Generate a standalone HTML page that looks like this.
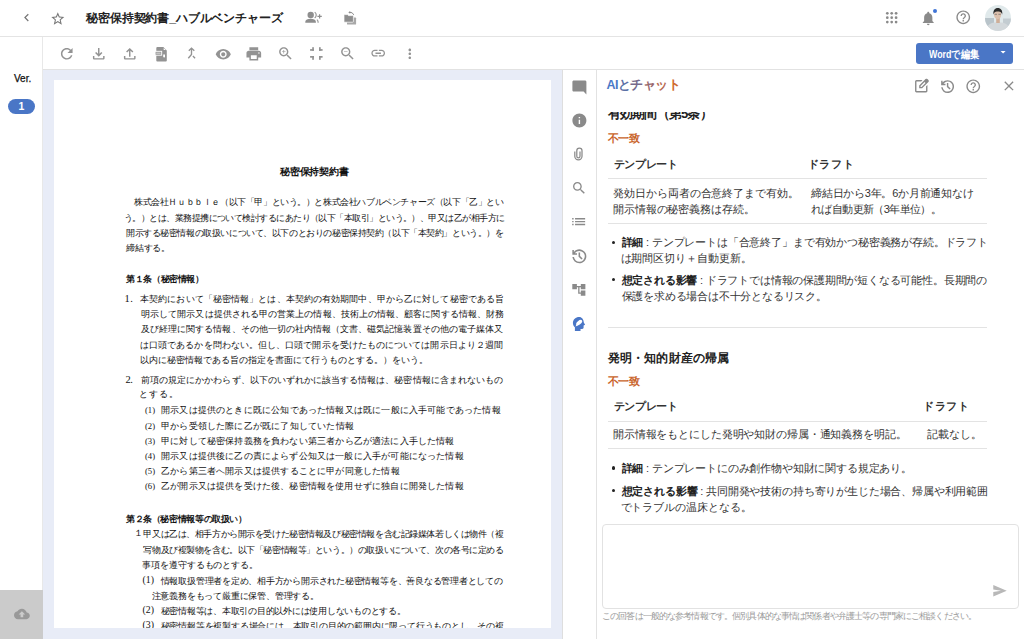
<!DOCTYPE html>
<html lang="ja"><head><meta charset="utf-8">
<style>
*{box-sizing:border-box;margin:0;padding:0}
html,body{width:1024px;height:639px;overflow:hidden;background:#fff;font-family:"Liberation Sans",sans-serif;color:#222}
svg{position:absolute;overflow:visible}
.grad{background:linear-gradient(90deg,#4a78c8 0%,#4f74bc 22%,#7a6a86 45%,#b0674e 70%,#d2661f 100%);-webkit-background-clip:text;background-clip:text;color:transparent!important}
#hdr{position:absolute;left:0;top:0;width:1024px;height:37px;background:#fff;border-bottom:1px solid #e4e4e4}
#title{position:absolute;left:86px;top:9px;font-size:13px;font-weight:bold;color:#222;white-space:nowrap;line-height:16px}
#side{position:absolute;left:0;top:37px;width:43px;height:602px;background:#fff;border-right:1px solid #e8e8e8}
#ver{position:absolute;left:0;width:43px;top:35px;text-align:center;font-size:10px;color:#222;line-height:12px}
#pill{position:absolute;left:8px;top:62px;width:27px;height:15px;border-radius:8px;background:#4a76c6;color:#fff;font-size:10.5px;font-weight:bold;text-align:center;line-height:15px}
#upl{position:absolute;left:0;top:553px;width:43px;height:49px;background:#cbcbcb}
#tb{position:absolute;left:43px;top:37px;width:981px;height:33px;background:#fff;border-bottom:1px solid #e2e2e2}
#word{position:absolute;left:873px;top:6px;width:97px;height:21px;border-radius:3px;background:#4a76c6;color:#fff;font-size:11px;font-weight:bold;line-height:21px}
#docarea{position:absolute;left:43px;top:70px;width:520px;height:569px;background:#e8ecf7;border-right:1px solid #dedede}
#page{position:absolute;left:11px;top:10px;width:497px;height:548px;background:#fff;overflow:hidden}
.tl{position:absolute;white-space:nowrap;line-height:1}
#page .tl{color:#111;font-family:"Liberation Serif",serif}
#rail{position:absolute;left:563px;top:70px;width:34px;height:569px;background:#fff;border-right:1px solid #e2e2e2}
#chat{position:absolute;left:597px;top:70px;width:427px;height:569px;background:#fff}
#scroll{position:absolute;left:0;top:42px;width:427px;height:408px;overflow:hidden}
.cl{position:absolute;white-space:nowrap;line-height:1;color:#444}
.cl b{font-weight:bold}
.hr{position:absolute;left:11px;width:379px;height:1px;background:#e3e3e3}
#aititle{position:absolute;left:10px;top:9px;font-size:12.5px;line-height:14px;white-space:nowrap;background:linear-gradient(90deg,#4a78c8 0%,#4f72b8 20%,#7a6a86 45%,#b0674e 70%,#d2661f 100%);-webkit-background-clip:text;background-clip:text;color:transparent;font-weight:bold}
#inp{position:absolute;left:5px;top:454px;width:417px;height:85px;border:1px solid #e2e2e2;border-radius:4px;background:#fff}
.dot{position:absolute;width:2px;height:2px;border-radius:1px;background:#555}
</style></head><body>

<div id="hdr">
  <svg style="left:18.5px;top:10.2px" width="15.2" height="15.2" viewBox="0 0 24 24"><path fill="#777" d="M15.41 7.41L14 6l-6 6 6 6 1.41-1.41L10.83 12z"/></svg>
  <svg style="left:49.7px;top:10.7px" width="15.6" height="15.6" viewBox="0 0 24 24"><path fill="#777" d="M22 9.24l-7.19-.62L12 2 9.19 8.63 2 9.24l5.46 4.73L5.82 21 12 17.27 18.18 21l-1.63-7.03L22 9.24zM12 15.4l-3.76 2.27 1-4.28-3.32-2.88 4.38-.38L12 6.1l1.71 4.04 4.38.38-3.32 2.88 1 4.28L12 15.4z"/></svg>
  <svg style="left:295px;top:2px" width="70" height="32" viewBox="0 0 70 32">
    <circle cx="15.7" cy="13" r="3.2" fill="#8e8e8e"/>
    <path d="M10.3 20.8v-1.1c0-1.9 2.4-2.9 5.3-2.9s5.3 1 5.3 2.9v1.1z" fill="#8e8e8e"/>
    <path d="M19.7 10.1a3.6 3.6 0 0 1 0 5.9" fill="none" stroke="#8e8e8e" stroke-width="1.1"/>
    <path d="M21.9 17.6q1.2 .9 1.2 2.4v.8" fill="none" stroke="#8e8e8e" stroke-width="1.1"/>
    <path d="M22.4 14.4h4.4M24.6 12.2v4.4" fill="none" stroke="#8e8e8e" stroke-width="1.2"/>
    <path d="M52 15.6h8.4q.7 0 .7.7v5.6q0 .7-.7.7h-7.7q-.7 0-.7-.7z" fill="#a8a8a8"/>
    <path d="M49 13.3q0-.7.7-.7h2.7l1 1h4.3q.7 0 .7.7v5.2q0 .7-.7.7h-8q-.7 0-.7-.7z" fill="#8e8e8e" stroke="#fff" stroke-width=".7"/>
    <path d="M54.6 10.3q2.9-.4 4.2 2.6" fill="none" stroke="#8e8e8e" stroke-width="1"/>
    <path d="M53.3 10.4l1.9-1.5v2.8z" fill="#8e8e8e"/>
  </svg>
  <svg style="left:886px;top:12.3px" width="12" height="12" viewBox="0 0 12 12"><circle cx="1.3" cy="1.3" r="1.35" fill="#8a8a8a"/><circle cx="1.3" cy="5.7" r="1.35" fill="#8a8a8a"/><circle cx="1.3" cy="10.1" r="1.35" fill="#8a8a8a"/><circle cx="5.7" cy="1.3" r="1.35" fill="#8a8a8a"/><circle cx="5.7" cy="5.7" r="1.35" fill="#8a8a8a"/><circle cx="5.7" cy="10.1" r="1.35" fill="#8a8a8a"/><circle cx="10.1" cy="1.3" r="1.35" fill="#8a8a8a"/><circle cx="10.1" cy="5.7" r="1.35" fill="#8a8a8a"/><circle cx="10.1" cy="10.1" r="1.35" fill="#8a8a8a"/></svg>
  <svg style="left:920.2px;top:9.6px" width="16.5" height="16.5" viewBox="0 0 24 24"><path fill="#8a8a8a" d="M12 22c1.1 0 2-.9 2-2h-4c0 1.1.89 2 2 2zm6-6v-5c0-3.07-1.64-5.64-4.5-6.32V4c0-.83-.67-1.5-1.5-1.5s-1.5.67-1.5 1.5v.68C7.63 5.36 6 7.92 6 11v5l-2 2v1h16v-1l-2-2z"/></svg>
  <div style="position:absolute;left:933px;top:9px;width:4.4px;height:4.4px;border-radius:50%;background:#3f74d6"></div>
  <svg style="left:954.6px;top:9.4px" width="16.5" height="16.5" viewBox="0 0 24 24"><path fill="#8a8a8a" d="M11 18h2v-2h-2v2zm1-16C6.48 2 2 6.48 2 12s4.48 10 10 10 10-4.48 10-10S17.52 2 12 2zm0 18c-4.41 0-8-3.59-8-8s3.59-8 8-8 8 3.59 8 8-3.59 8-8 8zm0-14c-2.21 0-4 1.79-4 4h2c0-1.1.9-2 2-2s2 .9 2 2c0 2-3 1.75-3 5h2c0-2.25 3-2.5 3-5 0-2.21-1.79-4-4-4z"/></svg>
  <!-- avatar -->
  <svg style="left:984.6px;top:4.5px" width="26" height="26" viewBox="0 0 26 26">
    <defs><clipPath id="av"><circle cx="13" cy="13" r="13"/></clipPath></defs>
    <g clip-path="url(#av)">
      <rect width="26" height="26" fill="#e0e9eb"/>
      <rect x="0" y="13" width="9" height="9" fill="#b9c4ca"/>
      <rect x="18" y="13.5" width="8" height="8" fill="#c3ccd1"/>
      <path d="M1 26c.5-5.5 4-8.8 12-8.8s11.5 3.3 12 8.8z" fill="#d3d8db"/>
      <rect x="11.2" y="13" width="3.6" height="5" fill="#cfae98"/>
      <ellipse cx="12.6" cy="9.6" rx="3.7" ry="4.6" fill="#dcc0ad"/>
      <path d="M8.4 9.6c-.5-4 1.5-6.6 4.4-6.6s5 2.3 4.4 6.6c-.4-1.6-1.2-3.2-4.4-3.2s-4 1.6-4.4 3.2z" fill="#2b2b2b"/>
      <path d="M9.6 9.3h2.4M13.4 9.3h2.4" stroke="#555" stroke-width=".6"/>
    </g>
  </svg>
</div>

<div id="side">
  <div id="pill">1</div>
  <div id="upl"></div>
</div>
<svg style="left:13.5px;top:606.2px" width="15.8" height="15.8" viewBox="0 0 24 24"><path fill="#999" d="M19.35 10.04C18.67 6.59 15.64 4 12 4 9.11 4 6.6 5.64 5.35 8.04 2.34 8.36 0 10.91 0 14c0 3.31 2.69 6 6 6h13c2.76 0 5-2.24 5-5 0-2.64-2.05-4.78-4.65-4.96zM14 13v4h-4v-4H7l5-5 5 5h-3z"/></svg>

<div id="tb">
  <div id="word">  <svg style="left:80.9px;top:2.9px" width="12.2" height="12.2" viewBox="0 0 24 24"><path fill="#fff" d="M7 10l5 5 5-5z"/></svg></div>
</div>
<!-- toolbar icons (body coords) -->
<svg style="left:58.4px;top:45.3px" width="17.5" height="17.5" viewBox="0 0 24 24"><path fill="#939393" d="M17.65 6.35C16.2 4.9 14.21 4 12 4c-4.42 0-7.99 3.58-7.99 8s3.57 8 7.99 8c3.73 0 6.84-2.55 7.73-6h-2.08c-.82 2.33-3.04 4-5.65 4-3.31 0-6-2.69-6-6s2.69-6 6-6c1.66 0 3.14.69 4.22 1.78L13 11h7V4l-2.35 2.35z"/></svg>
<svg style="left:89.7px;top:44.9px" width="17.5" height="17.5" viewBox="0 0 24 24"><path fill="#939393" d="M18 15v3H6v-3H4v3c0 1.1.9 2 2 2h12c1.1 0 2-.9 2-2v-3h-2zm-1-4l-1.41-1.41L13 12.17V4h-2v8.17L8.41 9.59 7 11l5 5 5-5z"/></svg>
<svg style="left:120.9px;top:44.9px" width="17.5" height="17.5" viewBox="0 0 24 24"><path fill="#939393" d="M18 15v3H6v-3H4v3c0 1.1.9 2 2 2h12c1.1 0 2-.9 2-2v-3h-2zM7 9l1.41 1.41L11 7.83V16h2V7.83l2.59 2.58L17 9l-5-5-5 5z"/></svg>
<svg style="left:150px;top:42px" width="50" height="22" viewBox="0 0 50 22">
<path d="M7.3 4.9H13.3L16.8 8.4V18.6Q16.8 19.6 15.8 19.6H7.3Q6.3 19.6 6.3 18.6V5.9Q6.3 4.9 7.3 4.9Z" fill="#939393"/>
<path d="M13.7 5.9L15.8 8H13.7Z" fill="#fff"/>
<rect x="5.1" y="9.3" width="6.6" height="3.9" fill="#939393" stroke="#fff" stroke-width="0.9"/>
<rect x="6.2" y="10.5" width="4.4" height="1.5" fill="#c4c4c4"/>
<path d="M13.2 12.4h1.8v2.2l-.9 1.5-.9-1.5z" fill="#fff"/>
<path d="M38.8 8.8L41.5 6.1L44.3 8.8M41.5 6.3V12.4L38.3 16.3M42.9 14.1L45.1 16.3" fill="none" stroke="#939393" stroke-width="1.35"/>
</svg>

<svg style="left:214.9px;top:45.6px" width="16.5" height="16.5" viewBox="0 0 24 24"><path fill="#939393" d="M12 4.5C7 4.5 2.73 7.61 1 12c1.73 4.39 6 7.5 11 7.5s9.27-3.11 11-7.5c-1.73-4.39-6-7.5-11-7.5zM12 17c-2.76 0-5-2.24-5-5s2.24-5 5-5 5 2.24 5 5-2.24 5-5 5zm0-8c-1.66 0-3 1.34-3 3s1.34 3 3 3 3-1.34 3-3-1.34-3-3-3z"/></svg>
<svg style="left:245.3px;top:44.6px" width="17.6" height="17.6" viewBox="0 0 24 24"><path fill="#939393" d="M19 8H5c-1.66 0-3 1.34-3 3v6h4v4h12v-4h4v-6c0-1.66-1.34-3-3-3zm-3 11H8v-5h8v5zm3-7c-.55 0-1-.45-1-1s.45-1 1-1 1 .45 1 1-.45 1-1 1zm-1-9H6v4h12V3z"/></svg>
<svg style="left:276.6px;top:44.9px" width="17.1" height="17.1" viewBox="0 0 24 24"><path fill="#939393" d="M15.5 14h-.79l-.28-.27C15.41 12.59 16 11.110 16 9.5 16 5.91 13.09 3 9.5 3S3 5.91 3 9.5 5.91 16 9.5 16c1.61 0 3.09-.59 4.23-1.57l.27.28v.79l5 4.99L20.49 19l-4.99-5zm-6 0C7.01 14 5 11.99 5 9.5S7.01 5 9.5 5 14 7.01 14 9.5 11.99 14 9.5 14zm2.5-4h-2v2H9v-2H7V9h2V7h1v2h2v1z"/></svg>
<svg style="left:302px;top:42px" width="28" height="22" viewBox="0 0 28 22"><g fill="#939393">
<rect x="10.2" y="5.2" width="1.7" height="3.6"/><rect x="8.1" y="7.1" width="3.8" height="1.7"/>
<rect x="17" y="5.2" width="1.7" height="3.6"/><rect x="17" y="7.1" width="3.6" height="1.7"/>
<rect x="8.1" y="14" width="3.8" height="1.7"/><rect x="10.2" y="14" width="1.7" height="3.8"/>
<rect x="17" y="14" width="3.6" height="1.7"/><rect x="17" y="14" width="1.7" height="3.8"/></g></svg>
<svg style="left:338.9px;top:44.9px" width="17.1" height="17.1" viewBox="0 0 24 24"><path fill="#939393" d="M15.5 14h-.79l-.28-.27C15.41 12.59 16 11.11 16 9.5 16 5.91 13.09 3 9.5 3S3 5.91 3 9.5 5.91 16 9.5 16c1.61 0 3.09-.59 4.23-1.57l.27.28v.79l5 4.99L20.49 19l-4.99-5zm-6 0C7.01 14 5 11.99 5 9.5S7.01 5 9.5 5 14 7.01 14 9.5 11.99 14 9.5 14zM7 9h5v1H7z"/></svg>
<svg style="left:370.4px;top:44.8px" width="16.4" height="16.4" viewBox="0 0 24 24"><path fill="#939393" d="M3.9 12c0-1.71 1.39-3.1 3.1-3.1h4V7H7c-2.76 0-5 2.240-5 5s2.24 5 5 5h4v-1.9H7c-1.71 0-3.1-1.39-3.1-3.1zM8 13h8v-2H8v2zm9-6h-4v1.9h4c1.71 0 3.1 1.39 3.1 3.1s-1.39 3.1-3.1 3.1h-4V17h4c2.76 0 5-2.24 5-5s-2.24-5-5-5z"/></svg>
<svg style="left:401.9px;top:46.1px" width="15.6" height="15.6" viewBox="0 0 24 24"><path fill="#939393" d="M12 8c1.1 0 2-.9 2-2s-.9-2-2-2-2 .9-2 2 .9 2 2 2zm0 2c-1.1 0-2 .9-2 2s.9 2 2 2 2-.9 2-2-.9-2-2-2zm0 6c-1.1 0-2 .9-2 2s.9 2 2 2 2-.9 2-2-.9-2-2-2z"/></svg>

<div id="docarea">
  <div id="page">
<div class="tl" style="font-size:10px;font-weight:bold;letter-spacing:-0.167px;left:226.00px;top:86.90px;font-family:"Liberation Serif",serif;">秘密保持契約書</div>
<div class="tl" style="font-size:8.6px;letter-spacing:-0.405px;left:80.00px;top:118.40px;font-family:"Liberation Serif",serif;">株式会社Ｈｕｂｂｌｅ（以下「甲」という。）と株式会社ハブルベンチャーズ（以下「乙」とい</div>
<div class="tl" style="font-size:8.6px;letter-spacing:-0.545px;left:70.00px;top:133.60px;font-family:"Liberation Serif",serif;">う。）とは、業務提携について検討するにあたり（以下「本取引」という。）、甲又は乙が相手方に</div>
<div class="tl" style="font-size:8.6px;letter-spacing:-0.419px;left:72.00px;top:149.20px;font-family:"Liberation Serif",serif;">開示する秘密情報の取扱いについて、以下のとおりの秘密保持契約（以下「本契約」という。）を</div>
<div class="tl" style="font-size:8.6px;letter-spacing:-0.250px;left:72.00px;top:163.90px;font-family:"Liberation Serif",serif;">締結する。</div>
<div class="tl" style="font-size:8.6px;font-weight:bold;letter-spacing:-0.375px;left:72.00px;top:195.30px;font-family:"Liberation Serif",serif;">第１条（秘密情報）</div>
<div class="tl" style="font-size:10.5px;letter-spacing:0.500px;left:70.50px;top:213.80px;font-family:"Liberation Serif",serif;">1.</div>
<div class="tl" style="font-size:8.6px;letter-spacing:0.103px;left:86.00px;top:214.80px;font-family:"Liberation Serif",serif;">本契約において「秘密情報」とは、本契約の有効期間中、甲から乙に対して秘密である旨</div>
<div class="tl" style="font-size:8.6px;letter-spacing:0.077px;left:87.00px;top:229.80px;font-family:"Liberation Serif",serif;">明示して開示又は提供される甲の営業上の情報、技術上の情報、顧客に関する情報、財務</div>
<div class="tl" style="font-size:8.6px;letter-spacing:0.051px;left:87.00px;top:245.40px;font-family:"Liberation Serif",serif;">及び経理に関する情報、その他一切の社内情報（文書、磁気記憶装置その他の電子媒体又</div>
<div class="tl" style="font-size:8.6px;letter-spacing:0.077px;left:86.00px;top:260.50px;font-family:"Liberation Serif",serif;">は口頭であるかを問わない。但し、口頭で開示を受けたものについては開示日より２週間</div>
<div class="tl" style="font-size:8.6px;letter-spacing:0.016px;left:86.00px;top:275.70px;font-family:"Liberation Serif",serif;">以内に秘密情報である旨の指定を書面にて行うものとする。）をいう。</div>
<div class="tl" style="font-size:10.5px;letter-spacing:-0.500px;left:71.50px;top:294.60px;font-family:"Liberation Serif",serif;">2.</div>
<div class="tl" style="font-size:8.6px;letter-spacing:0.051px;left:87.00px;top:295.60px;font-family:"Liberation Serif",serif;">前項の規定にかかわらず、以下のいずれかに該当する情報は、秘密情報に含まれないもの</div>
<div class="tl" style="font-size:8.6px;letter-spacing:1.000px;left:85.00px;top:310.40px;font-family:"Liberation Serif",serif;">とする。</div>
<div class="tl" style="font-size:8.6px;left:91.00px;top:326.20px;font-family:"Liberation Serif",serif;">(1)</div>
<div class="tl" style="font-size:8.6px;letter-spacing:0.181px;left:107.00px;top:326.20px;font-family:"Liberation Serif",serif;">開示又は提供のときに既に公知であった情報又は既に一般に入手可能であった情報</div>
<div class="tl" style="font-size:8.6px;left:91.00px;top:341.60px;font-family:"Liberation Serif",serif;">(2)</div>
<div class="tl" style="font-size:8.6px;letter-spacing:0.185px;left:107.00px;top:341.60px;font-family:"Liberation Serif",serif;">甲から受領した際に乙が既に了知していた情報</div>
<div class="tl" style="font-size:8.6px;left:91.00px;top:356.80px;font-family:"Liberation Serif",serif;">(3)</div>
<div class="tl" style="font-size:8.6px;letter-spacing:0.177px;left:107.00px;top:356.80px;font-family:"Liberation Serif",serif;">甲に対して秘密保持義務を負わない第三者から乙が適法に入手した情報</div>
<div class="tl" style="font-size:8.6px;left:91.00px;top:372.00px;font-family:"Liberation Serif",serif;">(4)</div>
<div class="tl" style="font-size:8.6px;letter-spacing:0.175px;left:107.00px;top:372.00px;font-family:"Liberation Serif",serif;">開示又は提供後に乙の責によらず公知又は一般に入手が可能になった情報</div>
<div class="tl" style="font-size:8.6px;left:91.00px;top:387.40px;font-family:"Liberation Serif",serif;">(5)</div>
<div class="tl" style="font-size:8.6px;letter-spacing:0.184px;left:107.00px;top:387.40px;font-family:"Liberation Serif",serif;">乙から第三者へ開示又は提供することに甲が同意した情報</div>
<div class="tl" style="font-size:8.6px;left:91.00px;top:402.20px;font-family:"Liberation Serif",serif;">(6)</div>
<div class="tl" style="font-size:8.6px;letter-spacing:0.175px;left:107.00px;top:402.20px;font-family:"Liberation Serif",serif;">乙が開示又は提供を受けた後、秘密情報を使用せずに独自に開発した情報</div>
<div class="tl" style="font-size:8.6px;font-weight:bold;letter-spacing:-0.385px;left:72.00px;top:434.80px;font-family:"Liberation Serif",serif;">第２条（秘密情報等の取扱い）</div>
<div class="tl" style="font-size:8.6px;left:79.50px;top:449.40px;font-family:"Liberation Serif",serif;">１</div>
<div class="tl" style="font-size:8.6px;letter-spacing:-0.424px;left:89.40px;top:450.40px;font-family:"Liberation Serif",serif;">甲又は乙は、相手方から開示を受けた秘密情報及び秘密情報を含む記録媒体若しくは物件（複</div>
<div class="tl" style="font-size:8.6px;letter-spacing:-0.424px;left:89.40px;top:465.70px;font-family:"Liberation Serif",serif;">写物及び複製物を含む。以下「秘密情報等」という。）の取扱いについて、次の各号に定める</div>
<div class="tl" style="font-size:8.6px;letter-spacing:-0.117px;left:88.40px;top:481.00px;font-family:"Liberation Serif",serif;">事項を遵守するものとする。</div>
<div class="tl" style="font-size:9.8px;letter-spacing:-0.050px;left:88.60px;top:494.60px;font-family:"Liberation Serif",serif;">(1)</div>
<div class="tl" style="font-size:8.6px;letter-spacing:-0.229px;left:106.70px;top:497.20px;font-family:"Liberation Serif",serif;">情報取扱管理者を定め、相手方から開示された秘密情報等を、善良なる管理者としての</div>
<div class="tl" style="font-size:8.6px;letter-spacing:-0.194px;left:97.50px;top:511.50px;font-family:"Liberation Serif",serif;">注意義務をもって厳重に保管、管理する。</div>
<div class="tl" style="font-size:9.8px;letter-spacing:-0.050px;left:88.60px;top:525.10px;font-family:"Liberation Serif",serif;">(2)</div>
<div class="tl" style="font-size:8.6px;letter-spacing:-0.256px;left:106.70px;top:526.70px;font-family:"Liberation Serif",serif;">秘密情報等は、本取引の目的以外には使用しないものとする。</div>
<div class="tl" style="font-size:9.8px;letter-spacing:-0.050px;left:88.60px;top:540.40px;font-family:"Liberation Serif",serif;">(3)</div>
<div class="tl" style="font-size:8.6px;letter-spacing:-0.203px;left:106.70px;top:542.00px;font-family:"Liberation Serif",serif;">秘密情報等を複製する場合には、本取引の目的の範囲内に限って行うものとし、その複</div>
  </div>
</div>

<div id="rail"></div>
<svg style="left:570.6px;top:78.6px" width="16.8" height="16.8" viewBox="0 0 24 24"><path fill="#8a8a8a" d="M21.99 4c0-1.1-.89-2-1.99-2H4c-1.1 0-2 .9-2 2v12c0 1.1.9 2 2 2h14l4 4-.01-18z"/></svg>
<svg style="left:570.6px;top:112.1px" width="16.8" height="16.8" viewBox="0 0 24 24"><path fill="#8a8a8a" d="M12 2C6.48 2 2 6.48 2 12s4.48 10 10 10 10-4.48 10-10S17.52 2 12 2zm1 15h-2v-6h2v6zm0-8h-2V7h2v2z"/></svg>
<svg style="left:574.3px;top:147px" width="9" height="14" viewBox="0 0 9 14"><path d="M0.8 4.6V9.2A3.6 3.6 0 0 0 8 9.2V3.7A2.6 2.6 0 0 0 2.8 3.7V9.2A1.6 1.6 0 0 0 6 9.2V4.6" fill="none" stroke="#8a8a8a" stroke-width="1.25"/></svg>
<svg style="left:571px;top:180px" width="16.2" height="16.2" viewBox="0 0 24 24"><path fill="#8a8a8a" d="M15.5 14h-.79l-.28-.27C15.41 12.59 16 11.11 16 9.5 16 5.91 13.09 3 9.5 3S3 5.91 3 9.5 5.91 16 9.5 16c1.61 0 3.09-.59 4.23-1.57l.27.28v.79l5 4.99L20.49 19l-4.99-5zm-6 0C7.01 14 5 11.99 5 9.5S7.01 5 9.5 5 14 7.01 14 9.5 11.99 14 9.5 14z"/></svg>
<svg style="left:570.3px;top:213.4px" width="17.3" height="17.3" viewBox="0 0 24 24"><path fill="#8a8a8a" d="M3 13h2v-2H3v2zm0 4h2v-2H3v2zm0-8h2V7H3v2zm4 4h14v-2H7v2zm0 4h14v-2H7v2zM7 7v2h14V7H7z"/></svg>
<svg style="left:569.7px;top:247.1px" width="18.7" height="18.7" viewBox="0 -960 960 960"><path fill="#8a8a8a" d="M480-120q-138 0-240.5-91.5T122-440h82q14 104 92.5 172T480-200q117 0 198.5-81.5T760-480q0-117-81.5-198.5T480-760q-69 0-129 32t-101 88h110v80H120v-240h80v94q51-64 124.5-99T480-840q75 0 140.5 28.5t114 77q48.5 48.5 77 114T840-480q0 75-28.5 140.5t-77 114q-48.5 48.5-114 77T480-120Zm112-192L440-464v-216h80v184l128 128-56 56Z"/></svg>
<svg style="left:571.2px;top:281.8px" width="15.7" height="15.7" viewBox="0 0 24 24"><path fill="#8a8a8a" d="M22 11V3h-7v3H9V3H2v8h7V8h2v10h4v3h7v-8h-7v3h-2V8h2v3z"/></svg>
<svg style="left:572px;top:316.6px" width="14" height="14" viewBox="0 0 14 14"><path fill="#4a76c6" d="M7.3 0C3.6 0 .9 2.6.9 6c0 1.8.8 3.3 2 4.3V14h5.6v-2h1.7c.8 0 1.4-.6 1.4-1.4V8.4l1.5-.6-1.3-2.3C11.6 2.4 9.8 0 7.3 0z"/><ellipse cx="7.2" cy="5.6" rx="3.5" ry="1.9" transform="rotate(-40 7.2 5.6)" fill="#fff"/><path d="M3.6 9.6l.9-2.6 1.6 1.2z" fill="#fff"/></svg>

<div id="chat">
  <svg style="left:316.4px;top:7.7px" width="16.5" height="16.5" viewBox="0 -960 960 960"><path fill="#8a8a8a" d="M200-120q-33 0-56.5-23.5T120-200v-560q0-33 23.5-56.5T200-840h357l-80 80H200v560h560v-278l80-80v358q0 33-23.5 56.5T760-120H200Zm280-360ZM360-360v-170l367-367q12-12 27-18t30-6q16 0 30.5 6t26.5 18l56 57q11 12 17 26.5t6 29.5q0 15-5.5 29.5T897-728L530-360H360Zm481-424-56-56 56 56ZM440-440h56l232-232-28-28-29-28-231 231v57Zm260-260-29-28 29 28 28 28-28-28Z"/></svg>
  <svg style="left:341.85px;top:7.85px" width="17.2" height="17.2" viewBox="0 -960 960 960"><path fill="#8a8a8a" d="M480-120q-138 0-240.5-91.5T122-440h82q14 104 92.5 172T480-200q117 0 198.5-81.5T760-480q0-117-81.5-198.5T480-760q-69 0-129 32t-101 88h110v80H120v-240h80v94q51-64 124.5-99T480-840q75 0 140.5 28.5t114 77q48.5 48.5 77 114T840-480q0 75-28.5 140.5t-77 114q-48.5 48.5-114 77T480-120Zm112-192L440-464v-216h80v184l128 128-56 56Z"/></svg>
  <svg style="left:367.9px;top:7.6px" width="16.5" height="16.5" viewBox="0 0 24 24"><path fill="#8a8a8a" d="M11 18h2v-2h-2v2zm1-16C6.48 2 2 6.48 2 12s4.48 10 10 10 10-4.48 10-10S17.52 2 12 2zm0 18c-4.41 0-8-3.59-8-8s3.59-8 8-8 8 3.59 8 8-3.59 8-8 8zm0-14c-2.21 0-4 1.79-4 4h2c0-1.1.9-2 2-2s2 .9 2 2c0 2-3 1.75-3 5h2c0-2.25 3-2.5 3-5 0-2.21-1.790-4-4-4z"/></svg>
  <svg style="left:403.6px;top:8.2px" width="15.9" height="15.9" viewBox="0 0 24 24"><path fill="#8a8a8a" d="M19 6.41L17.59 5 12 10.59 6.41 5 5 6.41 10.59 12 5 17.59 6.41 19 12 13.41 17.59 19 19 17.59 13.41 12z"/></svg>
  <div id="scroll">
    <div class="hr" style="top:66px"></div>
    <div class="hr" style="top:110.7px"></div>
    <div class="dot" style="left:14.8px;top:128.5px;width:3.4px;height:3.4px;border-radius:50%;background:#222"></div>
    <div class="dot" style="left:14.8px;top:166px;width:3.4px;height:3.4px;border-radius:50%;background:#222"></div>
    <div class="hr" style="top:214.6px"></div>
    <div class="hr" style="top:308.5px"></div>
    <div class="hr" style="top:336px"></div>
    <div class="dot" style="left:14.8px;top:354.2px;width:3.4px;height:3.4px;border-radius:50%;background:#222"></div>
    <div class="dot" style="left:14.8px;top:376.7px;width:3.4px;height:3.4px;border-radius:50%;background:#222"></div>
<div class="tl" style="font-size:13px;font-weight:bold;color:#222;letter-spacing:-0.838px;left:11.00px;top:-5.20px;">有効期間（第5条）</div>
<div class="tl" style="font-size:11px;font-weight:bold;color:#c9642b;letter-spacing:-0.650px;left:11.00px;top:20.60px;">不一致</div>
<div class="tl" style="font-size:11px;font-weight:bold;color:#333;letter-spacing:-0.420px;left:16.80px;top:47.30px;">テンプレート</div>
<div class="tl" style="font-size:11px;font-weight:bold;color:#333;letter-spacing:0.667px;left:210.50px;top:47.00px;">ドラフト</div>
<div class="tl" style="font-size:11px;color:#333;letter-spacing:-0.062px;left:16.00px;top:75.50px;">発効日から両者の合意終了まで有効。</div>
<div class="tl" style="font-size:11px;color:#333;letter-spacing:-0.125px;left:16.00px;top:91.80px;">開示情報の秘密義務は存続。</div>
<div class="tl" style="font-size:11px;color:#333;letter-spacing:-0.233px;left:214.00px;top:75.50px;">締結日から3年。6か月前通知なけ</div>
<div class="tl" style="font-size:11px;color:#333;letter-spacing:-0.617px;left:214.00px;top:91.80px;">れば自動更新（3年単位）。</div>
<div class="tl" style="font-size:11px;color:#333;letter-spacing:-0.157px;left:24.50px;top:125.00px;"><b style="color:#222">詳細</b> : テンプレートは「合意終了」まで有効かつ秘密義務が存続。ドラフト</div>
<div class="tl" style="font-size:11px;color:#333;letter-spacing:-0.045px;left:23.50px;top:141.30px;">は期間区切り＋自動更新。</div>
<div class="tl" style="font-size:11px;color:#333;letter-spacing:-0.186px;left:24.50px;top:162.80px;"><b style="color:#222">想定される影響</b> : ドラフトでは情報の保護期間が短くなる可能性。長期間の</div>
<div class="tl" style="font-size:11px;color:#333;letter-spacing:-0.194px;left:24.50px;top:179.00px;">保護を求める場合は不十分となるリスク。</div>
<div class="tl" style="font-size:12px;font-weight:bold;color:#222;letter-spacing:0.111px;left:11.00px;top:240.00px;">発明・知的財産の帰属</div>
<div class="tl" style="font-size:11px;font-weight:bold;color:#c9642b;letter-spacing:-0.650px;left:11.00px;top:263.70px;">不一致</div>
<div class="tl" style="font-size:11px;font-weight:bold;color:#333;letter-spacing:-0.420px;left:16.80px;top:289.30px;">テンプレート</div>
<div class="tl" style="font-size:11px;font-weight:bold;color:#333;letter-spacing:0.600px;left:326.20px;top:289.00px;">ドラフト</div>
<div class="tl" style="font-size:11px;color:#333;letter-spacing:-0.127px;left:16.00px;top:316.90px;">開示情報をもとにした発明や知財の帰属・通知義務を明記。</div>
<div class="tl" style="font-size:11px;color:#333;letter-spacing:0.025px;left:329.50px;top:316.90px;">記載なし。</div>
<div class="tl" style="font-size:11px;color:#333;letter-spacing:-0.161px;left:24.50px;top:351.00px;"><b style="color:#222">詳細</b> : テンプレートにのみ創作物や知財に関する規定あり。</div>
<div class="tl" style="font-size:11px;color:#333;letter-spacing:-0.157px;left:24.50px;top:373.60px;"><b style="color:#222">想定される影響</b> : 共同開発や技術の持ち寄りが生じた場合、帰属や利用範囲</div>
<div class="tl" style="font-size:11px;color:#333;letter-spacing:-0.045px;left:23.50px;top:389.70px;">でトラブルの温床となる。</div>
  </div>
  <div id="inp"></div>
<div class="tl" style="font-size:8.6px;color:#9a9a9a;letter-spacing:-0.867px;left:5.00px;top:542.40px;">この回答は一般的な参考情報です。個別具体的な事情は関係者や弁護士等の専門家にご相談ください。</div>
  <svg style="left:395.2px;top:513px" width="15.4" height="15.4" viewBox="0 0 24 24"><path fill="#b8b8b8" d="M2.01 21L23 12 2.01 3 2 10l12 2-12 2z"/></svg>
</div>

<div class="tl" style="font-size:12.2px;font-weight:bold;color:#222;letter-spacing:-0.125px;left:86.00px;top:11.70px;">秘密保持契約書_ハブルベンチャーズ</div>
<div class="tl" style="font-size:10.5px;font-weight:bold;color:#fff;transform:scaleX(0.8383);transform-origin:0 0;left:929.00px;top:49.30px;">Wordで編集</div>
<div class="tl" style="font-size:10px;color:#111;left:14.00px;top:74.00px;-webkit-text-stroke:0.25px #111;">Ver.</div>
<div class="tl" style="font-size:12.5px;font-weight:bold;letter-spacing:-0.583px;left:606.60px;top:79.30px;"><span style="color:#4a7ac8">A</span><span style="color:#4c78c4">I</span><span style="color:#5b70a6">と</span><span style="color:#776a8c">チ</span><span style="color:#98686e">ャ</span><span style="color:#b66850">ッ</span><span style="color:#cf6a2e">ト</span></div>
<script>(function(){var W=[68.84, 369.59, 380.48, 377.58, 43.75, 77.63, 8.88, 364.13, 363.09, 362.05, 363.09, 288.52, 6.88, 362.05, 40, 0, 339.7, 0, 192.89, 0, 293.67, 0, 302.78, 0, 238.8, 0, 302.78, 120.63, 0, 360.2, 360.2, 115.48, 11.28, 342.08, 167.33, 11.28, 244.84, 11.28, 343.09, 103.7, 31.06, 63.48, 46.67, 185.95, 141.38, 162.52, 130.11, 366.53, 131.47, 365.48, 205.33, 121.13, 31.06, 63.48, 46.41, 293.58, 55.13, 290.52, 366.53, 131.47, 374.13, 196.66, 0, 0, 73.45];var els=document.querySelectorAll(".tl");for(var i=0;i<els.length&&i<W.length;i++){var w=W[i];if(!w)continue;var e=els[i];var n=e.textContent.length;var cur=e.getBoundingClientRect().width;if(Math.abs(cur-w)>0.3){var ls=parseFloat(e.style.letterSpacing)||0;e.style.letterSpacing=(ls+(w-cur)/n)+"px";}}})();</script>
</body></html>
